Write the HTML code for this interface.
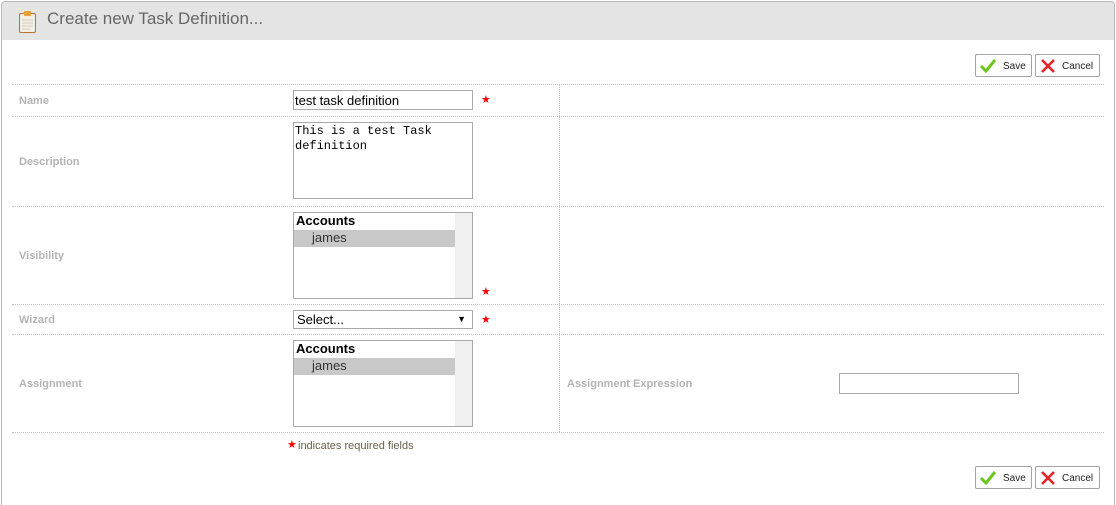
<!DOCTYPE html>
<html style="width:1116px;height:505px;overflow:hidden"><head><style>
*{margin:0;padding:0;box-sizing:border-box}
body{width:1116px;height:505px;background:#fff;font-family:"Liberation Sans",Arial,sans-serif;position:relative;overflow:hidden}
.panel{position:absolute;left:1px;top:1px;width:1114px;height:504px;border:1px solid #b8b8b8;border-bottom:0;border-radius:4px 4px 0 0}
.hdr{position:absolute;left:2px;top:2px;width:1112px;height:38px;background:#e4e4e4;border-radius:3px 3px 0 0}
.title{position:absolute;left:47px;top:9px;font-size:17px;color:#666}
.a{position:absolute}
.hl{position:absolute;left:12px;width:1092px;border-top:1px dotted #c4c4c4;height:0}
.lbl{position:absolute;left:19px;font-size:11px;font-weight:bold;color:#b4b4b4}
.inp{position:absolute;border:1px solid #a9a9a9;background:#fff}
.star{position:absolute;color:#f00;font-size:11px}
.btn{position:absolute;height:23px;border:1px solid #a4a4a4;border-radius:2px;background:#fff;font-size:10px;color:#222}
.lst{position:absolute;border:1px solid #a9a9a9;background:#fff;font-size:13px}
.sb{position:absolute;right:0;top:0;bottom:0;width:17px;background:#f0f0f0}
</style></head><body>
<div class="panel"></div>
<div class="hdr"></div>
<svg class="a" style="left:18px;top:10px" width="20" height="24" viewBox="0 0 20 24"><rect x="1.5" y="3.5" width="16" height="19" rx="1.5" fill="#f3ede3" stroke="#b7742a"/><rect x="6" y="1" width="7" height="5" rx="1" fill="#e8a030"/><path d="M4 10h11M4 13h11M4 16h11M4 19h8" stroke="#d8d0c4"/></svg>
<div class="title">Create new Task Definition...</div>

<div class="btn" style="left:975px;top:54px;width:57px"><svg class="a" style="left:4px;top:3px" width="16" height="15"><path d="M1 8l5 5L15 2" stroke="#6bc51f" stroke-width="3" fill="none"/></svg><span class="a" style="left:27px;top:6px">Save</span></div>
<div class="btn" style="left:1035px;top:54px;width:65px"><svg class="a" style="left:5px;top:4px" width="14" height="14"><path d="M1 1L13 13M13 1L1 13" stroke="#e8242a" stroke-width="2.6"/></svg><span class="a" style="left:26px;top:6px">Cancel</span></div>

<div class="hl" style="top:84px"></div>
<div class="hl" style="top:116px"></div>
<div class="hl" style="top:206px"></div>
<div class="hl" style="top:304px"></div>
<div class="hl" style="top:334px"></div>
<div class="hl" style="top:432px"></div>
<div class="a" style="left:559px;top:84px;height:348px;border-left:1px dotted #c4c4c4"></div>

<div class="lbl" style="top:95px">Name</div>
<div class="inp" style="left:293px;top:90px;width:180px;height:20px;font-size:13px;padding:2px 1px">test task definition</div>
<div class="star" style="left:481px;top:93px">★</div>

<div class="lbl" style="top:156px">Description</div>
<div class="inp" style="left:293px;top:122px;width:180px;height:77px;font-family:'Liberation Mono',monospace;font-size:12px;padding:1px 1px;line-height:15px">This is a test Task definition</div>

<div class="lbl" style="top:250px">Visibility</div>
<div class="lst" style="left:293px;top:212px;width:180px;height:87px"><div class="sb"></div><div style="font-weight:bold;padding:0 2px;height:17px">Accounts</div><div style="background:#c8c8c8;width:161px;padding-left:18px;height:17px;color:#333">james</div></div>
<div class="star" style="left:481px;top:285px">★</div>

<div class="lbl" style="top:314px">Wizard</div>
<div class="inp" style="left:293px;top:310px;width:180px;height:19px;font-size:13px;padding:1px 3px">Select...<span class="a" style="right:6px;top:3px;font-size:9px">▼</span></div>
<div class="star" style="left:481px;top:313px">★</div>

<div class="lbl" style="top:378px">Assignment</div>
<div class="lst" style="left:293px;top:340px;width:180px;height:87px"><div class="sb"></div><div style="font-weight:bold;padding:0 2px;height:17px">Accounts</div><div style="background:#c8c8c8;width:161px;padding-left:18px;height:17px;color:#333">james</div></div>
<div class="lbl" style="left:567px;top:378px">Assignment Expression</div>
<div class="inp" style="left:839px;top:373px;width:180px;height:21px"></div>

<div class="star" style="left:287px;top:438px">★</div>
<div class="a" style="left:298px;top:440px;font-size:11px;color:#6a6050">indicates required fields</div>

<div class="btn" style="left:975px;top:466px;width:57px"><svg class="a" style="left:4px;top:3px" width="16" height="15"><path d="M1 8l5 5L15 2" stroke="#6bc51f" stroke-width="3" fill="none"/></svg><span class="a" style="left:27px;top:6px">Save</span></div>
<div class="btn" style="left:1035px;top:466px;width:65px"><svg class="a" style="left:5px;top:4px" width="14" height="14"><path d="M1 1L13 13M13 1L1 13" stroke="#e8242a" stroke-width="2.6"/></svg><span class="a" style="left:26px;top:6px">Cancel</span></div>
</body></html>
